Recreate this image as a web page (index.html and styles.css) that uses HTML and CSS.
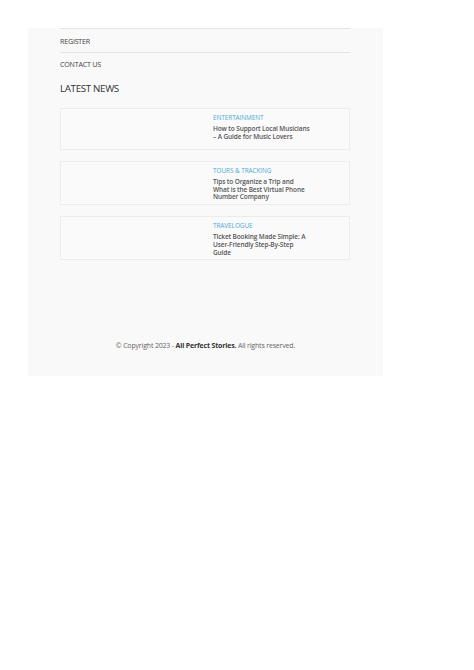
FILE: index.html
```html
<!DOCTYPE html>
<html>
<head>
<meta charset="utf-8">
<link rel="stylesheet" href="styles.css">
</head>
<body>
<div class="page">
  <div class="panel">
    <div class="content">
      <ul class="menu">
        <li class="menu-item">REGISTER</li>
        <li class="menu-item">CONTACT US</li>
      </ul>
      <h2 class="heading">LATEST NEWS</h2>
      <div class="news">
        <div class="card">
          <div class="thumb"></div>
          <div class="info">
            <div class="cat">ENTERTAINMENT</div>
            <div class="title">How to Support Local Musicians – A Guide for Music Lovers</div>
          </div>
        </div>
        <div class="card">
          <div class="thumb"></div>
          <div class="info">
            <div class="cat">TOURS &amp; TRACKING</div>
            <div class="title">Tips to Organize a Trip and What is the Best Virtual Phone Number Company</div>
          </div>
        </div>
        <div class="card">
          <div class="thumb"></div>
          <div class="info">
            <div class="cat">TRAVELOGUE</div>
            <div class="title">Ticket Booking Made Simple: A User-Friendly Step-By-Step Guide</div>
          </div>
        </div>
      </div>
    </div>
    <div class="footer">
      <p class="copy">© Copyright 2023 - <b>All Perfect Stories.</b> All rights reserved.</p>
    </div>
  </div>
</div>
</body>
</html>
```

FILE: styles.css
```css
* { box-sizing: border-box; }
html, body { margin: 0; padding: 0; background: #fff; }
body { font-family: "Open Sans", "Noto Sans", sans-serif; color: #444; }
.page { padding: 28px 0 0 28px; }
.panel {
  width: 355px;
  height: 348px;
  background: #f9f9f9;
  display: flex;
  flex-direction: column;
}
.content { padding: 0 33px 0 32px; }
.menu { list-style: none; margin: 0; padding: 0; }
.menu-item {
  height: 24px;
  line-height: 24px;
  border-top: 1px solid #e4e4e4;
  font-size: 7.1px;
  color: #444;
  letter-spacing: -0.2px;
}
.menu-item:last-child { line-height: 23px; }
.heading {
  margin: 6px 0 0 0;
  font-size: 9.8px;
  font-weight: 500;
  color: #333;
  line-height: 14px;
  letter-spacing: -0.35px;
}
.news {
  margin-top: 12px;
  display: flex;
  flex-direction: column;
  gap: 11px;
}
.card {
  display: flex;
  min-height: 42px;
  border: 1px solid #ececec;
  background: #fafafa;
}
.thumb { width: 152px; flex: none; }
.info { padding: 4px 0 3px 0; width: 97px; }
.cat {
  font-size: 6.4px;
  color: #4aa9d6;
  line-height: 9px;
  letter-spacing: -0.05px;
}
.title {
  margin-top: 3px;
  font-size: 6.5px;
  font-weight: 600;
  color: #555;
  line-height: 7.7px;
  letter-spacing: -0.12px;
}
.footer {
  margin-top: auto;
  padding-bottom: 25px;
  text-align: center;
}
.copy {
  margin: 0;
  font-size: 7px;
  color: #666;
  line-height: 10px;
  letter-spacing: -0.17px;
}
.copy b { color: #333; font-weight: 700; }
```
